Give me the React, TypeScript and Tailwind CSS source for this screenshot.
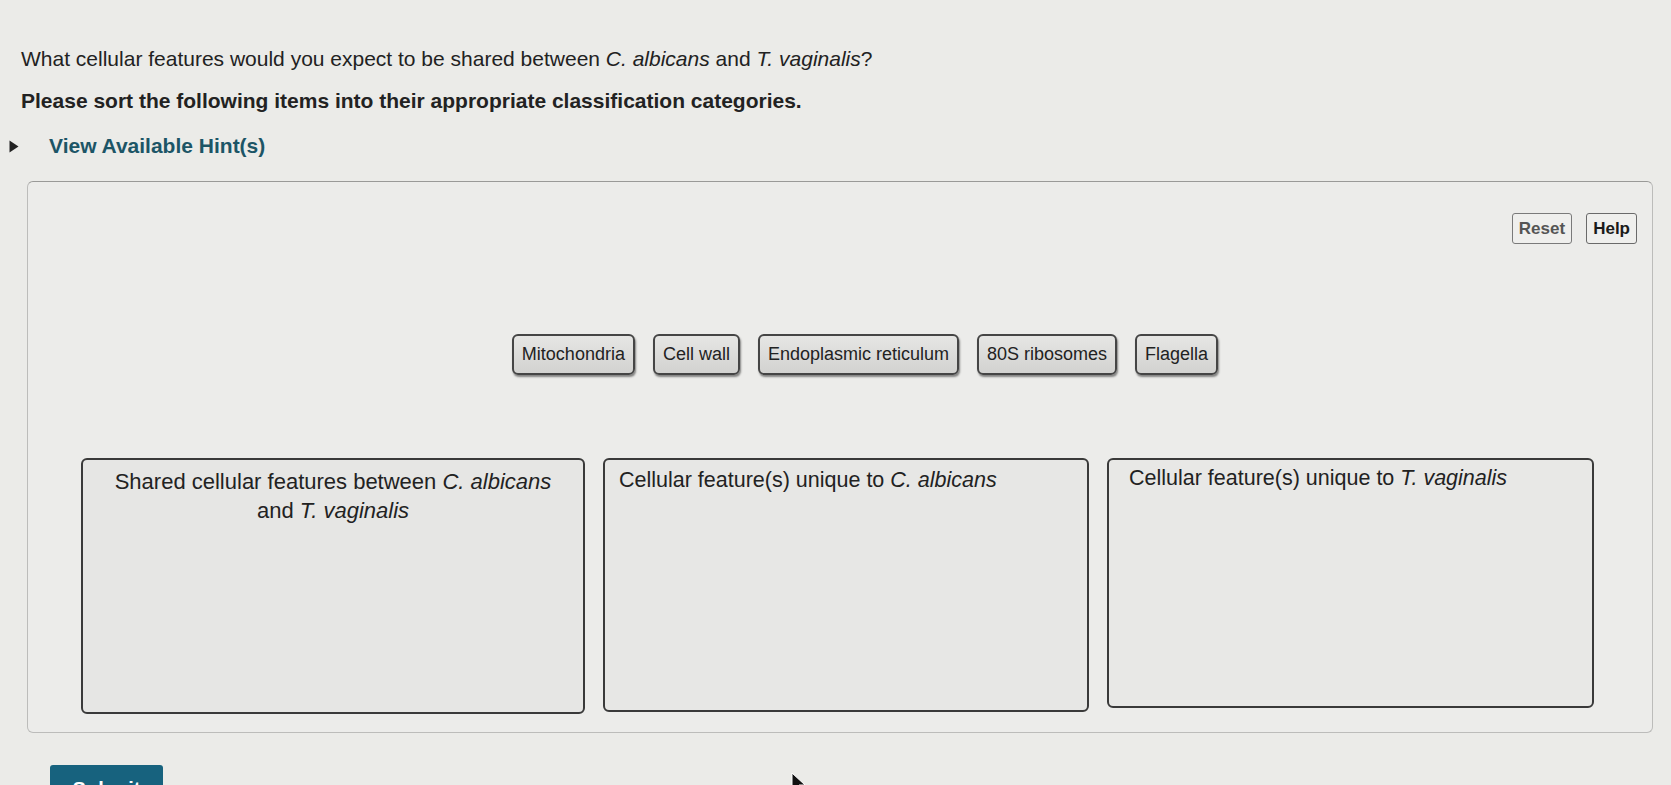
import React from 'react';

const items = ['Mitochondria', 'Cell wall', 'Endoplasmic reticulum', '80S ribosomes', 'Flagella'];

const Chip: React.FC<{ label: string }> = ({ label }) => (
  <div className="h-[41px] flex items-center px-[8px] rounded-[6px] border-2 border-[#454545] bg-gradient-to-b from-[#e6e6e4] to-[#d2d2d0] text-[18px] text-[#222] shadow-[1px_2px_2px_rgba(0,0,0,0.45)]">
    {label}
  </div>
);

const App: React.FC = () => {
  return (
    <div className="relative min-h-screen overflow-hidden bg-[#ebebe8] pl-[21px] pt-[47px] font-['Liberation_Sans',Arial,sans-serif] text-[#222]">
      <p className="text-[21px] leading-[24px]">
        What cellular features would you expect to be shared between <i>C. albicans</i> and{' '}
        <i>T. vaginalis</i>?
      </p>
      <p className="mt-[18px] text-[21px] font-bold leading-[24px]">
        Please sort the following items into their appropriate classification categories.
      </p>

      {/* hint toggle */}
      <div className="mt-[21px] -ml-[12px] flex items-center gap-[30px] text-[21px] font-bold leading-[24px] text-[#1c5566]">
        <svg width="10" height="13" viewBox="0 0 10 13">
          <path d="M0.5 0.5 L9.5 6.5 L0.5 12.5 Z" fill="#222" />
        </svg>
        <span>View Available Hint(s)</span>
      </div>

      {/* sorting panel */}
      <div className="mt-[23px] ml-[6px] w-[1626px] h-[552px] rounded-md border border-[#bcbcba] border-t-[#9a9a98] bg-[#ececea]">
        <div className="flex justify-end gap-[14px] pt-[31px] pr-[15px]">
          <button className="h-[31px] px-[6px] rounded-[3px] border border-[#7a7a7a] bg-[#efefed] text-[17px] font-bold text-[#555]">
            Reset
          </button>
          <button className="h-[31px] px-[6px] rounded-[3px] border border-[#6a6a6a] bg-[#efefed] text-[17px] font-bold text-[#1a1a1a]">
            Help
          </button>
        </div>

        <div className="mt-[90px] flex justify-center gap-[18px] pl-[50px]">
          {items.map((it) => (
            <Chip key={it} label={it} />
          ))}
        </div>

        <div className="mt-[83px] flex gap-[18px] pl-[53px]">
          <div className="w-[504px] h-[256px] rounded-md border-2 border-[#3a3a3a] bg-[#e6e6e4] px-[24px] pt-[7px] text-center text-[22px] leading-[29px]">
            Shared cellular features between <i>C. albicans</i> and <i>T. vaginalis</i>
          </div>
          <div className="w-[486px] h-[254px] rounded-md border-2 border-[#3a3a3a] bg-[#e7e7e5] px-[14px] pt-[6px] text-[21.5px] leading-[29px]">
            Cellular feature(s) unique to <i>C. albicans</i>
          </div>
          <div className="w-[487px] h-[250px] rounded-md border-2 border-[#3a3a3a] bg-[#e8e8e6] px-[20px] pt-[4px] text-[21.5px] leading-[29px]">
            Cellular feature(s) unique to <i>T. vaginalis</i>
          </div>
        </div>
      </div>

      <button className="mt-[32px] ml-[29px] w-[113px] h-[42px] rounded-[3px] bg-[#17627e] pt-[6px] text-[20px] font-bold text-white">
        Submit
      </button>

      {/* mouse pointer */}
      <svg className="absolute left-[791px] top-[772px]" width="16" height="22" viewBox="0 0 16 22">
        <path d="M1 1 L1 18 L5 14 L8 21 L11 20 L8 13 L14 13 Z" fill="#111" stroke="#fff" strokeWidth="1" />
      </svg>
    </div>
  );
};

export default App;
